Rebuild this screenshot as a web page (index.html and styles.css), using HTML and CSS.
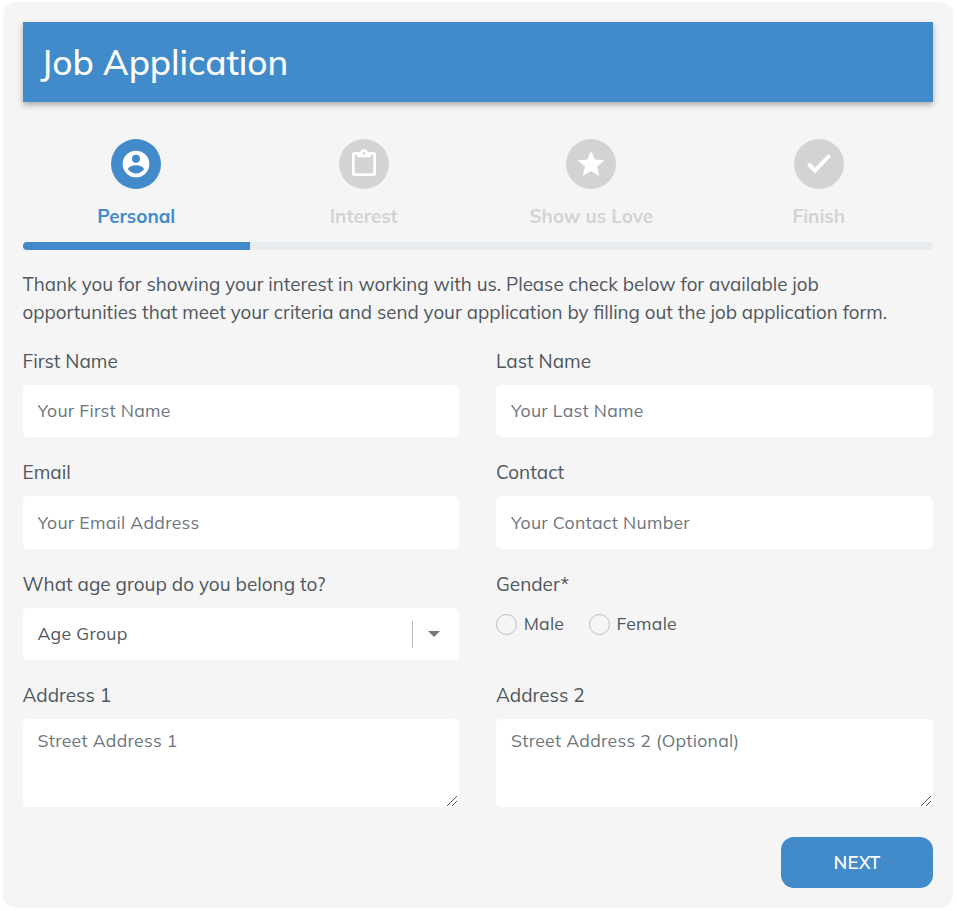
FILE: index.html
```html
<!DOCTYPE html>
<html lang="en">
<head>
    <meta charset="UTF-8">
    <meta name="viewport" content="width=device-width, initial-scale=1.0">
    <title>Job Application</title>
    <link rel="stylesheet" href="styles.css">
</head>
<body>
    <form class="wizard">
        <h1 class="wizard-title">Job Application</h1>

        <div class="steps">
            <div class="step active">
                <div class="step-icon">
                    <svg viewBox="0 0 24 24"><path d="M12 19.2c-2.5 0-4.71-1.28-6-3.2.03-2 4-3.1 6-3.1s5.97 1.1 6 3.1c-1.29 1.92-3.5 3.2-6 3.2M12 5a3 3 0 1 1 0 6 3 3 0 0 1 0-6m0-3a10 10 0 1 0 0 20 10 10 0 0 0 0-20z"/></svg>
                </div>
                <span class="step-name">Personal</span>
            </div>
            <div class="step">
                <div class="step-icon">
                    <svg viewBox="0 0 24 24"><path d="M19 3h-4.18C14.4 1.84 13.3 1 12 1s-2.4.84-2.82 2H5a2 2 0 0 0-2 2v14a2 2 0 0 0 2 2h14a2 2 0 0 0 2-2V5a2 2 0 0 0-2-2m-7 0a1 1 0 1 1 0 2 1 1 0 0 1 0-2M7 7h10V5h2v14H5V5h2z"/></svg>
                </div>
                <span class="step-name">Interest</span>
            </div>
            <div class="step">
                <div class="step-icon">
                    <svg viewBox="0 0 24 24"><path d="M12 17.27 18.18 21l-1.64-7.03L22 9.24l-7.19-.61L12 2 9.19 8.63 2 9.24l5.46 4.73L5.82 21z"/></svg>
                </div>
                <span class="step-name">Show us Love</span>
            </div>
            <div class="step">
                <div class="step-icon">
                    <svg viewBox="0 0 24 24"><path d="m21 6.5-12 12.6-6-6.1 2.1-2.1L9 14.9 19 4.5z"/></svg>
                </div>
                <span class="step-name">Finish</span>
            </div>
        </div>
        <div class="progress"><div class="progress-bar" style="width: 25%"></div></div>

        <p class="intro">Thank you for showing your interest in working with us. Please check below for available job opportunities that meet your criteria and send your application by filling out the job application form.</p>

        <div class="fields">
            <div class="field">
                <label for="first-name">First Name</label>
                <input class="control" type="text" id="first-name" placeholder="Your First Name">
            </div>
            <div class="field">
                <label for="last-name">Last Name</label>
                <input class="control" type="text" id="last-name" placeholder="Your Last Name">
            </div>
            <div class="field">
                <label for="email">Email</label>
                <input class="control" type="email" id="email" placeholder="Your Email Address">
            </div>
            <div class="field">
                <label for="contact">Contact</label>
                <input class="control" type="text" id="contact" placeholder="Your Contact Number">
            </div>
            <div class="field">
                <label for="age">What age group do you belong to?</label>
                <div class="select-box">
                    <select id="age">
                        <option>Age Group</option>
                    </select>
                    <span class="divider"></span>
                    <span class="arrow"></span>
                </div>
            </div>
            <div class="field">
                <span class="label">Gender*</span>
                <div class="radios">
                    <label class="radio"><input type="radio" name="gender">Male</label>
                    <label class="radio"><input type="radio" name="gender">Female</label>
                </div>
            </div>
            <div class="field">
                <label for="address1">Address 1</label>
                <textarea class="control" id="address1" placeholder="Street Address 1"></textarea>
            </div>
            <div class="field">
                <label for="address2">Address 2</label>
                <textarea class="control" id="address2" placeholder="Street Address 2 (Optional)"></textarea>
            </div>
        </div>

        <div class="actions">
            <button type="button" class="next">NEXT</button>
        </div>
    </form>
</body>
</html>
```

FILE: styles.css
```css
* {
    box-sizing: border-box;
}
body {
    margin: 0;
    padding: 2px 4.5px 3px 2.5px;
    background: #ffffff;
    font-family: Muli, Mulish, Lato, sans-serif;
    color: #50575e;
}
.wizard {
    height: 906px;
    padding: 20px;
    border-radius: 13px;
    background: #f5f5f5;
}
.wizard-title {
    display: flex;
    align-items: center;
    height: 80px;
    margin: 0 0 37px;
    padding: 0 18px;
    background: #428bca;
    color: #ffffff;
    font-size: 35.2px;
    font-weight: 550;
    letter-spacing: -0.1px;
    box-shadow: 0 3px 6px rgba(0, 0, 0, 0.3);
}
.steps {
    display: grid;
    grid-template-columns: repeat(4, 1fr);
    height: 103px;
}
.step {
    display: flex;
    flex-direction: column;
    align-items: center;
    gap: 13px;
    color: #d3d3d3;
}
.step-icon {
    display: flex;
    align-items: center;
    justify-content: center;
    width: 50px;
    height: 50px;
    border-radius: 50%;
    background: #d3d3d3;
}
.step-icon svg {
    width: 32px;
    height: 32px;
    fill: #ffffff;
}
.step-name {
    font-size: 18.8px;
    font-weight: 700;
    line-height: 28px;
}
.active {
    color: #428bca;
}
.active .step-icon {
    background: #428bca;
}
.progress {
    height: 8px;
    border-radius: 4px;
    background: #e9ecef;
    overflow: hidden;
}
.progress-bar {
    height: 8px;
    background: #428bca;
}
.intro {
    margin: 20px 0 21px;
    font-size: 18.78px;
    line-height: 28px;
}
.fields {
    display: grid;
    grid-template-columns: 1fr 1fr;
    column-gap: 37px;
    row-gap: 21.3px;
}
.field > label,
.label {
    display: block;
    margin-bottom: 10px;
    font-size: 18.95px;
    line-height: 28px;
}
.control,
.select-box {
    display: block;
    width: 100%;
    height: 52.2px;
    padding: 0 15px 2px;
    border: none;
    border-radius: 5px;
    background: #ffffff;
    color: #50575e;
    font-family: inherit;
    font-size: 17.6px;
    letter-spacing: 0.28px;
    outline: none;
}
.control::placeholder {
    color: #6c757d;
    opacity: 1;
}
textarea.control {
    height: 88px;
    padding-top: 8px;
    line-height: 26px;
    resize: vertical;
}
textarea.control::-webkit-resizer {
    background: url("data:image/svg+xml,%3Csvg xmlns='http://www.w3.org/2000/svg' width='15' height='15'%3E%3Cpath d='M3 14 13 4M8 14l5-5' stroke='%23555'/%3E%3C/svg%3E") no-repeat right bottom;
}
.select-box {
    display: flex;
    align-items: center;
    padding-bottom: 0;
}
.select-box select {
    flex: 1;
    padding: 0 0 2px;
    border: none;
    background: none;
    color: inherit;
    font: inherit;
    letter-spacing: inherit;
    appearance: none;
    outline: none;
}
.divider {
    width: 1px;
    height: 27px;
    margin: 1px 15px 0 0;
    background: #bbbbbb;
}
.arrow {
    margin-right: 4px;
    border: 6.5px solid transparent;
    border-top-color: #777777;
    border-bottom: none;
}
.radios {
    display: flex;
    gap: 24.5px;
    padding-top: 1px;
}
.radio {
    display: flex;
    align-items: center;
    gap: 6.7px;
    font-size: 17.6px;
    line-height: 28px;
    letter-spacing: 0.28px;
}
.radio input {
    width: 21px;
    height: 21px;
    margin: 3px 0 0;
    border: 1px solid #b9bfc4;
    border-radius: 50%;
    appearance: none;
}
.actions {
    display: flex;
    justify-content: flex-end;
    margin-top: 30px;
}
.next {
    width: 152px;
    height: 51px;
    border: none;
    border-radius: 13px;
    background: #428bca;
    color: #ffffff;
    font-family: Montserrat, Inter, sans-serif;
    font-size: 17.6px;
    font-weight: 500;
    letter-spacing: -0.3px;
    cursor: pointer;
}
```
